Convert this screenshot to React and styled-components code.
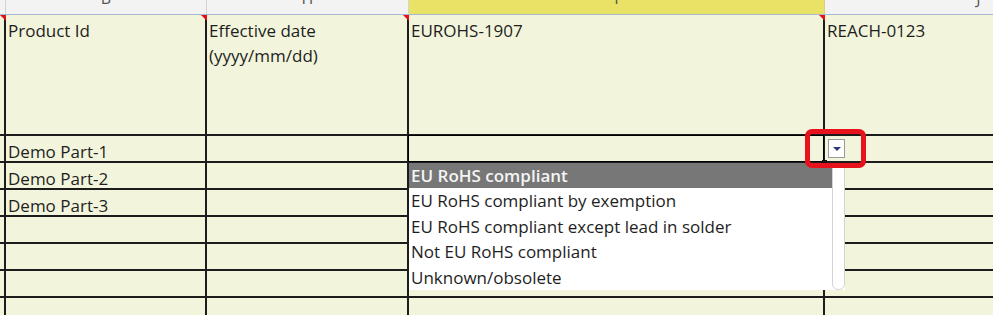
import React from "react";
import styled, { createGlobalStyle } from "styled-components";

const Global = createGlobalStyle`
  html, body { margin: 0; padding: 0; background: #f2f5dc; }
  body { width: 993px; height: 315px; overflow: hidden; }
`;

const COLS = "6px 201px 202px 416px 308px";
const FONT = `"Open Sans", "Noto Sans", sans-serif`;

const Sheet = styled.div`
  position: relative;
  width: 993px;
  height: 315px;
  overflow: hidden;
  background: #f2f5dc;
  font-family: ${FONT};
  font-size: 17px;
  color: #1e1e1e;
`;

const HeaderBar = styled.div`
  display: grid;
  grid-template-columns: ${COLS};
  height: 15px;
  border-bottom: 1px solid #a9b8cf;
  box-sizing: border-box;
`;

const ColHead = styled.div`
  display: flex;
  justify-content: center;
  overflow: hidden;
  background: ${(p) => (p.$active ? "#eae266" : "#f3f3f3")};
  border-right: 1px solid ${(p) => (p.$active ? "#d8d07a" : "#d4d4d4")};
  color: #555;
  font-size: 16px;
  line-height: 16px;
`;

const ColLetter = styled.span`
  margin-top: -10px;
`;

const Grid = styled.div`
  display: grid;
  grid-template-columns: ${COLS};
  grid-template-rows: 121px repeat(7, 27px);
`;

const Cell = styled.div`
  position: relative;
  box-sizing: border-box;
  border-right: 2px solid #1c1c1c;
  border-bottom: 2px solid #1c1c1c;
  padding: ${(p) => (p.$head ? "3px 0 0 2px" : "0 0 0 2px")};
  display: flex;
  flex-direction: column;
  justify-content: ${(p) => (p.$head ? "flex-start" : "flex-end")};
  line-height: ${(p) => (p.$head ? "25px" : "19px")};
  white-space: nowrap;
  overflow: visible;
`;

const CommentMark = styled.span`
  position: absolute;
  top: 0;
  right: -2px;
  width: 0;
  height: 0;
  border-top: 6px solid #e3101a;
  border-left: 6px solid transparent;
`;

const FillHandle = styled.span`
  position: absolute;
  right: -4px;
  bottom: -4px;
  width: 5px;
  height: 5px;
  background: #111;
  z-index: 2;
`;

const ActiveFrame = styled.span`
  position: absolute;
  inset: -1px -1px -1px -1px;
  border: 1px solid #000;
  pointer-events: none;
`;

const DropButton = styled.div`
  position: absolute;
  left: 828px;
  top: 139px;
  width: 17px;
  height: 19px;
  box-sizing: border-box;
  background: #fff;
  border: 1px solid #9a9a9a;
  display: flex;
  align-items: center;
  justify-content: center;
  z-index: 3;
`;

const Arrow = styled.span`
  width: 0;
  height: 0;
  border-left: 4px solid transparent;
  border-right: 4px solid transparent;
  border-top: 4px solid #2b3a78;
  margin-top: 1px;
`;

const Callout = styled.div`
  position: absolute;
  left: 805px;
  top: 129px;
  width: 61px;
  height: 39px;
  box-sizing: border-box;
  border: 5px solid #e8121c;
  border-radius: 7px;
  z-index: 4;
`;

const ListBox = styled.div`
  position: absolute;
  left: 409px;
  top: 163px;
  width: 436px;
  height: 127px;
  display: flex;
  background: #fff;
  z-index: 3;
`;

const Options = styled.ul`
  list-style: none;
  margin: 0;
  padding: 0;
  flex: 1;
`;

const Option = styled.li`
  height: 25.4px;
  line-height: 26px;
  padding-left: 2px;
  white-space: nowrap;
  background: ${(p) => (p.$selected ? "#777777" : "transparent")};
  color: ${(p) => (p.$selected ? "#f4f4f4" : "#1e1e1e")};
  font-weight: ${(p) => (p.$selected ? 600 : 400)};
`;

const ScrollTrack = styled.div`
  width: 13px;
  box-sizing: border-box;
  border: 1px solid #d3d3d3;
  border-radius: 6px;
  background: #fff;
`;

const headers = [
  { key: "A", label: "" },
  { key: "B", label: "B" },
  { key: "H", label: "H" },
  { key: "I", label: "I", active: true },
  { key: "J", label: "J" },
];

const titles = [
  { key: "A", text: "", mark: true },
  { key: "B", text: "Product Id", mark: true },
  { key: "H", text: ["Effective date", "(yyyy/mm/dd)"], mark: true },
  { key: "I", text: "EUROHS-1907", mark: true },
  { key: "J", text: "REACH-0123" },
];

const rows = ["Demo Part-1", "Demo Part-2", "Demo Part-3", "", "", "", ""];

const options = [
  "EU RoHS compliant",
  "EU RoHS compliant by exemption",
  "EU RoHS compliant except lead in solder",
  "Not EU RoHS compliant",
  "Unknown/obsolete",
];

export default function App() {
  return (
    <Sheet>
      <Global />
      <HeaderBar>
        {headers.map((h) => (
          <ColHead key={h.key} $active={h.active}>
            <ColLetter>{h.label}</ColLetter>
          </ColHead>
        ))}
      </HeaderBar>
      <Grid>
        {titles.map((t) => (
          <Cell key={t.key} $head>
            {Array.isArray(t.text) ? t.text.map((l) => <span key={l}>{l}</span>) : <span>{t.text}</span>}
            {t.mark && <CommentMark />}
          </Cell>
        ))}
        {rows.map((r, i) => (
          <React.Fragment key={i}>
            <Cell />
            <Cell>{r}</Cell>
            <Cell />
            <Cell>
              {i === 0 && (
                <>
                  <ActiveFrame />
                  <FillHandle />
                </>
              )}
            </Cell>
            <Cell />
          </React.Fragment>
        ))}
      </Grid>
      <ListBox>
        <Options>
          {options.map((o, i) => (
            <Option key={o} $selected={i === 0}>
              {o}
            </Option>
          ))}
        </Options>
        <ScrollTrack />
      </ListBox>
      <DropButton>
        <Arrow />
      </DropButton>
      <Callout />
    </Sheet>
  );
}
